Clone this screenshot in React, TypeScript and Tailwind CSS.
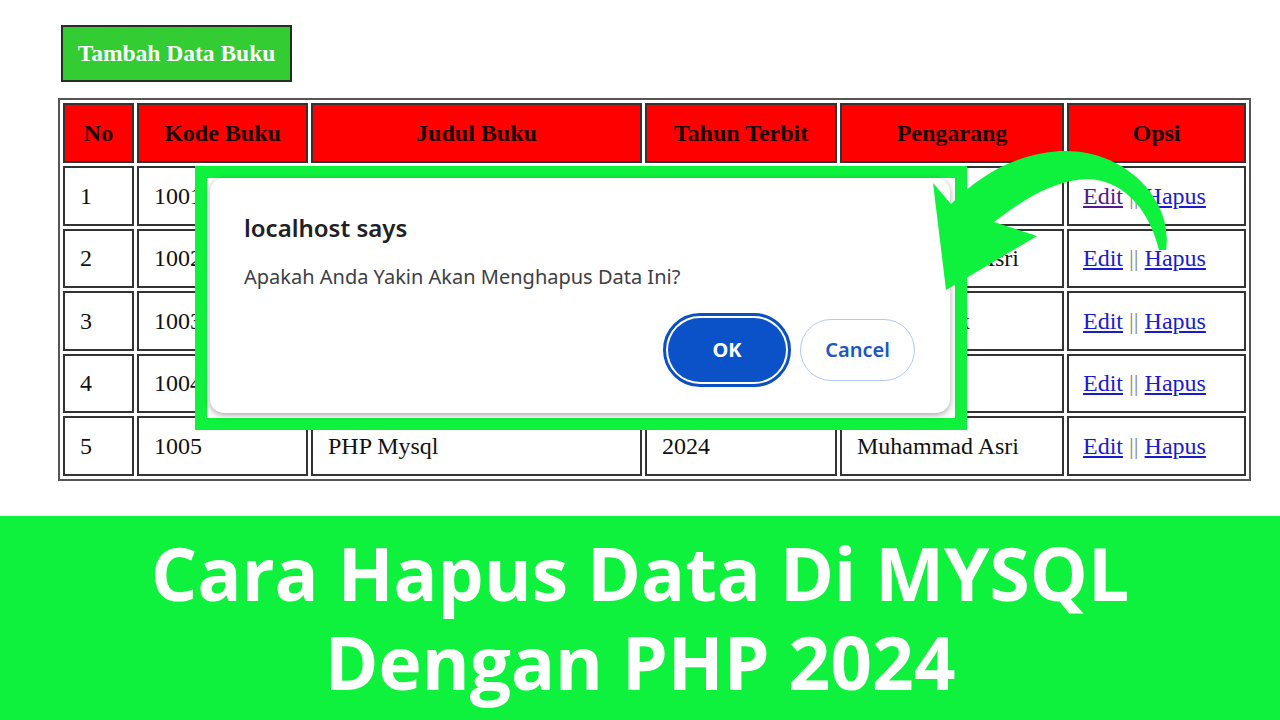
import React from "react";

const rows = [
  { no: "1", kode: "1001", judul: "HTML Dasar", tahun: "2023", pengarang: "Abdul Kadir", visited: true },
  { no: "2", kode: "1002", judul: "CSS Dasar", tahun: "2023", pengarang: "Muhammad Asri", visited: false },
  { no: "3", kode: "1003", judul: "Javascript", tahun: "2024", pengarang: "Betha Sidik", visited: false },
  { no: "4", kode: "1004", judul: "Bootstrap", tahun: "2024", pengarang: "Andi", visited: false },
  { no: "5", kode: "1005", judul: "PHP Mysql", tahun: "2024", pengarang: "Muhammad Asri", visited: false },
];

const cols = [71, 171, 331, 192, 224, 179];

export default function App() {
  return (
    <div className="relative w-[1280px] h-[720px] overflow-hidden bg-white">
      <div className="flex flex-col h-full">
        {/* top area */}
        <div className="h-[516px] flex flex-col pt-[25px]" style={{ fontFamily: '"Liberation Serif", "Times New Roman", serif' }}>
          <div className="ml-[61px] w-[231px] h-[57px] flex items-center justify-center bg-[#33cc33] border-2 border-[#2a2a2a] text-white font-bold text-[23.5px]">
            Tambah Data Buku
          </div>
          <table className="ml-[58px] mt-[16px] w-[1193px] table-fixed border-separate border-spacing-[3px] border-2 border-[#555] text-[24px] text-[#111]">
            <colgroup>
              {cols.map((w, i) => (
                <col key={i} style={{ width: w }} />
              ))}
            </colgroup>
            <thead>
              <tr className="h-[60px]">
                {["No", "Kode Buku", "Judul Buku", "Tahun Terbit", "Pengarang", "Opsi"].map((h) => (
                  <th key={h} className="bg-[#ff0000] border-2 border-[#333] text-center font-bold text-[#1c0000]">
                    {h}
                  </th>
                ))}
              </tr>
            </thead>
            <tbody>
              {rows.map((r) => (
                <tr key={r.no} className="h-[59.5px]">
                  <td className="border-2 border-[#333] pl-[15px]">{r.no}</td>
                  <td className="border-2 border-[#333] pl-[15px]">{r.kode}</td>
                  <td className="border-2 border-[#333] pl-[15px]">{r.judul}</td>
                  <td className="border-2 border-[#333] pl-[15px]">{r.tahun}</td>
                  <td className="border-2 border-[#333] pl-[15px]">{r.pengarang}</td>
                  <td className="border-2 border-[#333] pl-[14px]">
                    <span className={r.visited ? "underline text-[#551a8b]" : "underline text-[#1a1ad0]"}>Edit</span>
                    <span className="text-[#888]"> || </span>
                    <span className="underline text-[#1a1ad0]">Hapus</span>
                  </td>
                </tr>
              ))}
            </tbody>
          </table>
        </div>
        {/* banner */}
        <div
          className="h-[204px] bg-[#0ef23e] flex flex-col items-center pt-[12px] text-white font-bold text-[73px] leading-[89px]"
          style={{ fontFamily: '"Open Sans", "Noto Sans", sans-serif' }}
        >
          <div>Cara Hapus Data Di MYSQL</div>
          <div>Dengan PHP 2024</div>
        </div>
      </div>

      {/* dialog with green frame */}
      <div className="absolute left-[195px] top-[166px] w-[772px] h-[264px] border-[12px] border-[#0ef23e] bg-white pl-[3px] pr-[5px] pb-[5px]">
        <div
          className="h-full rounded-[14px] bg-white shadow-[0_2px_6px_rgba(0,0,0,0.35)] flex flex-col pl-[34px] pr-[35px] pt-[34px]"
          style={{ fontFamily: '"Noto Sans", "Open Sans", sans-serif' }}
        >
          <div className="text-[24px] leading-[32px] font-semibold text-[#202124]">localhost says</div>
          <div className="mt-[19px] text-[20px] leading-[28px] text-[#3c4043]">Apakah Anda Yakin Akan Menghapus Data Ini?</div>
          <div className="mt-[22px] flex justify-end items-center gap-[9px]">
            <div className="rounded-full border-[3px] border-[#0b4fc4] p-[2px] bg-white">
              <div className="w-[118px] h-[64px] rounded-full bg-[#0b52c9] flex items-center justify-center text-white font-bold text-[20px]">
                OK
              </div>
            </div>
            <div className="w-[115px] h-[62px] rounded-full border border-[#b3c9f2] flex items-center justify-center text-[#1a56c4] font-semibold text-[20px]">
              Cancel
            </div>
          </div>
        </div>
      </div>

      {/* curved arrow */}
      <svg className="absolute inset-0 pointer-events-none" width="1280" height="720" viewBox="0 0 1280 720">
        <path
          d="M 1166 250 C 1174 200 1125 148 1060 151 C 1015 154 980 175 951 204 L 933 183 L 946 290 L 1037 236 L 994 222 C 1025 198 1055 180 1088 179 C 1120 180 1148 205 1159 250 Z"
          fill="#0ef23e"
        />
      </svg>
    </div>
  );
}
